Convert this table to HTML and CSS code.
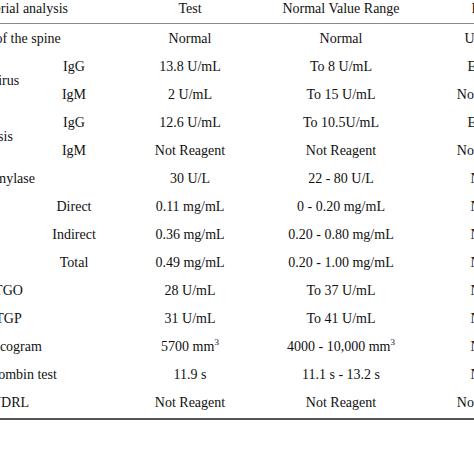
FILE: index.html
```html
<!DOCTYPE html>
<html>
<head>
<meta charset="utf-8">
<link rel="stylesheet" href="styles.css">
</head>
<body>
<div class="frame">
<table class="lab">
  <colgroup>
    <col class="c-group">
    <col class="c-sub">
    <col class="c-test">
    <col class="c-range">
    <col class="c-result">
  </colgroup>
  <thead>
    <tr>
      <th colspan="2" class="h-material">Material analysis</th>
      <th>Test</th>
      <th>Normal Value Range</th>
      <th>Results</th>
    </tr>
  </thead>
  <tbody>
    <tr class="first">
      <td colspan="2">X-ray of the spine</td>
      <td>Normal</td>
      <td>Normal</td>
      <td>Unaltered</td>
    </tr>
    <tr>
      <td rowspan="2" class="grp">Cytomegalovirus</td>
      <td>IgG</td>
      <td>13.8 U/mL</td>
      <td>To 8 U/mL</td>
      <td>Elevated</td>
    </tr>
    <tr>
      <td>IgM</td>
      <td>2 U/mL</td>
      <td>To 15 U/mL</td>
      <td>Not Reagent</td>
    </tr>
    <tr>
      <td rowspan="2" class="grp">Toxoplasmosis</td>
      <td>IgG</td>
      <td>12.6 U/mL</td>
      <td>To 10.5U/mL</td>
      <td>Elevated</td>
    </tr>
    <tr>
      <td>IgM</td>
      <td>Not Reagent</td>
      <td>Not Reagent</td>
      <td>Not Reagent</td>
    </tr>
    <tr>
      <td class="amy">Amylase</td>
      <td></td>
      <td>30 U/L</td>
      <td>22 - 80 U/L</td>
      <td>Normal</td>
    </tr>
    <tr>
      <td rowspan="3" class="grp">Bilirubin</td>
      <td>Direct</td>
      <td>0.11 mg/mL</td>
      <td>0 - 0.20 mg/mL</td>
      <td>Normal</td>
    </tr>
    <tr>
      <td>Indirect</td>
      <td>0.36 mg/mL</td>
      <td>0.20 - 0.80 mg/mL</td>
      <td>Normal</td>
    </tr>
    <tr>
      <td>Total</td>
      <td>0.49 mg/mL</td>
      <td>0.20 - 1.00 mg/mL</td>
      <td>Normal</td>
    </tr>
    <tr>
      <td colspan="2" class="nudge">TGO</td>
      <td>28 U/mL</td>
      <td>To 37 U/mL</td>
      <td>Normal</td>
    </tr>
    <tr>
      <td colspan="2" class="nudge">TGP</td>
      <td>31 U/mL</td>
      <td>To 41 U/mL</td>
      <td>Normal</td>
    </tr>
    <tr>
      <td colspan="2">Leucogram</td>
      <td>5700 mm<sup class="sup">3</sup></td>
      <td>4000 - 10,000 mm<sup class="sup">3</sup></td>
      <td>Normal</td>
    </tr>
    <tr>
      <td colspan="2">Prothrombin test</td>
      <td>11.9 s</td>
      <td>11.1 s - 13.2 s</td>
      <td>Normal</td>
    </tr>
    <tr class="last">
      <td colspan="2">VDRL</td>
      <td>Not Reagent</td>
      <td>Not Reagent</td>
      <td>Not Reagent</td>
    </tr>
  </tbody>
</table>
</div>
</body>
</html>
```
FILE: styles.css
```css
html, body {
  margin: 0;
  padding: 0;
  background: #ffffff;
  overflow: hidden;
}

.frame {
  width: 474px;
  height: 474px;
  overflow: hidden;
}

.lab {
  margin-left: -92px;
  border-collapse: collapse;
  table-layout: fixed;
  width: 662px;
  font-family: "Liberation Serif", "Times New Roman", serif;
  font-size: 14px;
  color: #111111;
}

.c-group { width: 128px; }
.c-sub { width: 76px; }
.c-test { width: 156px; }
.c-range { width: 146px; }
.c-result { width: 156px; }

.lab th {
  font-weight: normal;
  text-align: center;
  line-height: 18px;
  padding: 0 0 5px 0;
  border-bottom: 1px solid #8a8a8a;
  white-space: nowrap;
}

.lab th.h-material {
  padding-left: 20px;
}

.lab td {
  text-align: center;
  line-height: 28px;
  padding: 0;
  white-space: nowrap;
  vertical-align: middle;
}

.lab td.grp {
  padding-right: 2px;
}

.lab tr.first td {
  padding-top: 1px;
}

.lab tr.last td {
  padding-bottom: 1px;
  border-bottom: 2px solid #555555;
}

.lab td.amy {
  text-align: right;
  padding-right: 1px;
}

.lab td.nudge {
  padding-right: 3px;
}

.sup {
  font-size: 9px;
  line-height: 0;
  vertical-align: 6px;
}
```
